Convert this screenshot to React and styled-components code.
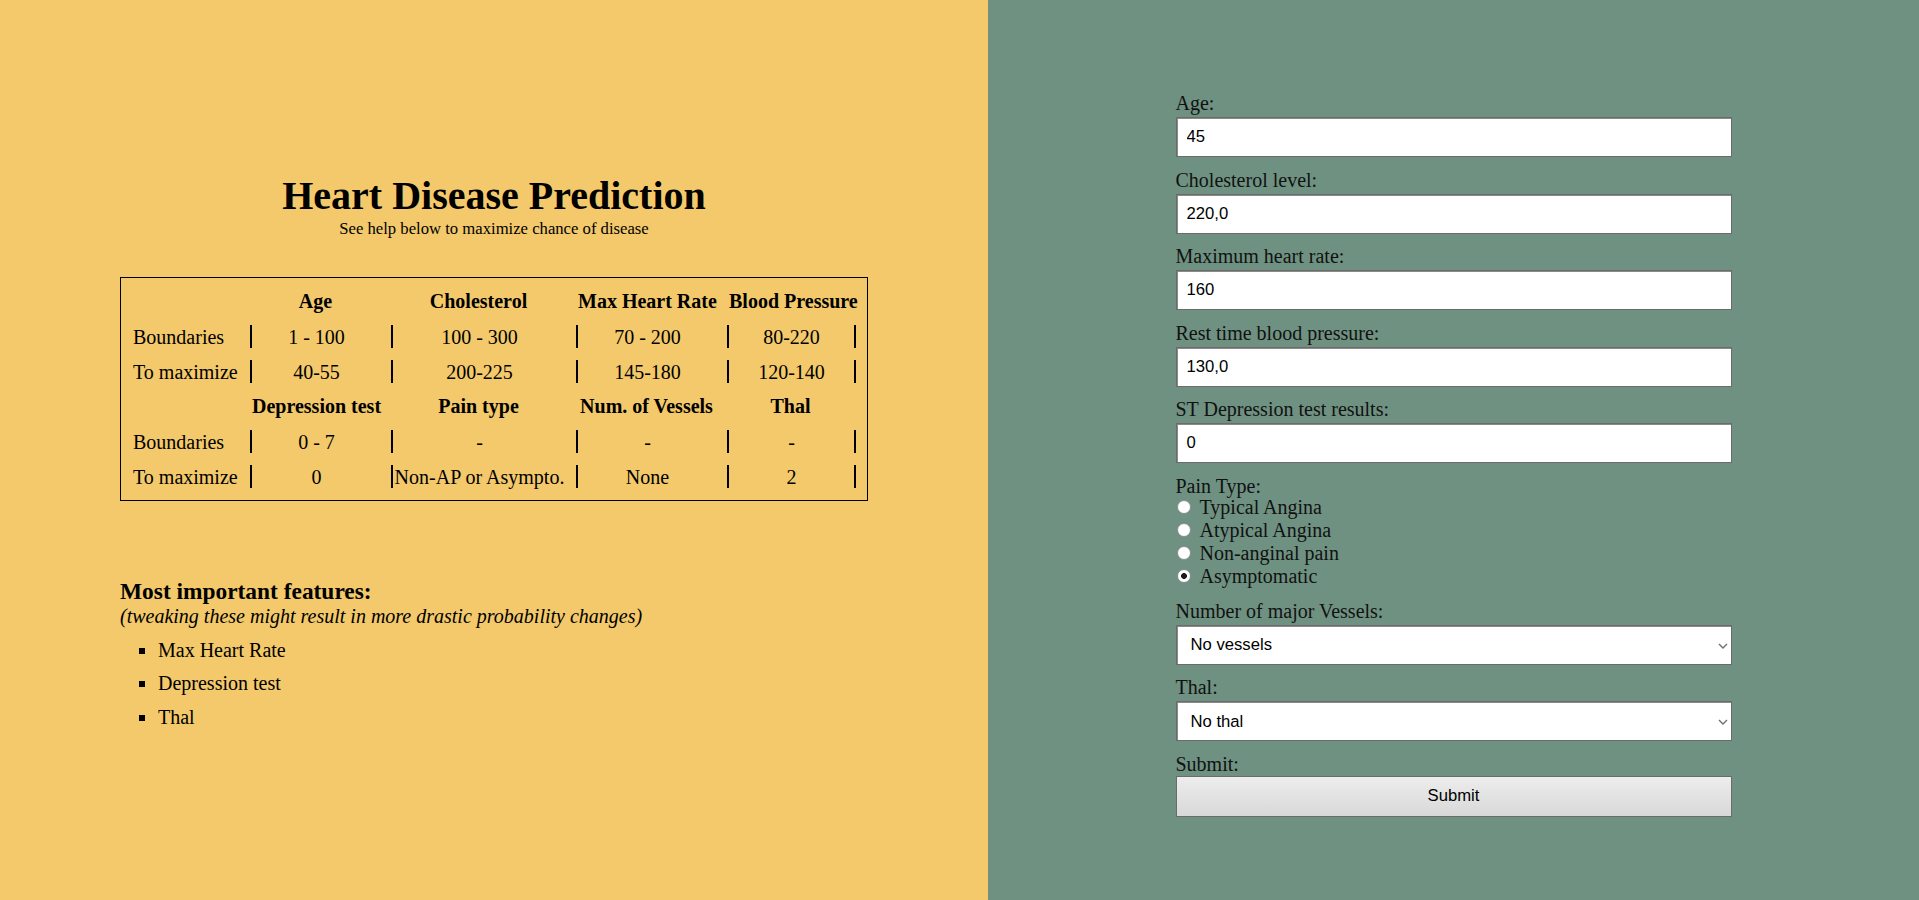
import React, { useState } from 'react';
import styled, { createGlobalStyle } from 'styled-components';

const features = [
  {
    headers: ['Age', 'Cholesterol', 'Max Heart Rate', 'Blood Pressure'],
    boundaries: ['1 - 100', '100 - 300', '70 - 200', '80-220'],
    maximize: ['40-55', '200-225', '145-180', '120-140'],
  },
  {
    headers: ['Depression test', 'Pain type', 'Num. of Vessels', 'Thal'],
    boundaries: ['0 - 7', '-', '-', '-'],
    maximize: ['0', 'Non-AP or Asympto.', 'None', '2'],
  },
];

const numberFields = [
  { name: 'age', label: 'Age:', value: '45' },
  { name: 'chol', label: 'Cholesterol level:', value: '220,0' },
  { name: 'thalach', label: 'Maximum heart rate:', value: '160' },
  { name: 'trestbps', label: 'Rest time blood pressure:', value: '130,0' },
  { name: 'oldpeak', label: 'ST Depression test results:', value: '0' },
];

const painTypes = ['Typical Angina', 'Atypical Angina', 'Non-anginal pain', 'Asymptomatic'];

const GlobalStyle = createGlobalStyle`
  html, body {
    margin: 0;
    padding: 0;
  }
  body {
    font-family: "Liberation Serif", "Times New Roman", serif;
    color: #000;
  }
`;

const Chevron = () => (
  <ChevronIcon width="10" height="6" viewBox="0 0 10 6" aria-hidden="true">
    <path d="M1 1l4 4 4-4" fill="none" stroke="#6f6f6f" strokeWidth="1.4" />
  </ChevronIcon>
);

const App = () => {
  const [pain, setPain] = useState('Asymptomatic');

  return (
    <Page>
      <GlobalStyle />
      <InfoPanel>
        <InfoContent>
          <Title>Heart Disease Prediction</Title>
          <Subtitle>See help below to maximize chance of disease</Subtitle>

          <HelpTable>
            <colgroup>
              <col style={{ width: 119 }} />
              <col style={{ width: 141 }} />
              <col style={{ width: 185 }} />
              <col style={{ width: 151 }} />
              <col style={{ width: 127 }} />
            </colgroup>
            <tbody>
              {features.map((group) => (
                <React.Fragment key={group.headers[0]}>
                  <tr>
                    <HeadCell />
                    {group.headers.map((h, i) => (
                      <HeadCell key={h} last={i === 3}>{h}</HeadCell>
                    ))}
                  </tr>
                  <tr>
                    <RowLabel>Boundaries</RowLabel>
                    {group.boundaries.map((v, i) => (
                      // eslint-disable-next-line react/no-array-index-key
                      <ValueCell key={i} last={i === 3}>{v}</ValueCell>
                    ))}
                  </tr>
                  <tr>
                    <RowLabel>To maximize</RowLabel>
                    {group.maximize.map((v, i) => (
                      // eslint-disable-next-line react/no-array-index-key
                      <ValueCell key={i} last={i === 3}>{v}</ValueCell>
                    ))}
                  </tr>
                </React.Fragment>
              ))}
            </tbody>
          </HelpTable>

          <Important>
            <ImportantTitle>Most important features:</ImportantTitle>
            <ImportantNote>(tweaking these might result in more drastic probability changes)</ImportantNote>
            <FeatureList>
              <li>Max Heart Rate</li>
              <li>Depression test</li>
              <li>Thal</li>
            </FeatureList>
          </Important>
        </InfoContent>
      </InfoPanel>

      <FormPanel>
        <Form onSubmit={(e) => e.preventDefault()}>
          {numberFields.map((f) => (
            <Field key={f.name}>
              <Label htmlFor={f.name}>{f.label}</Label>
              <TextInput id={f.name} name={f.name} type="text" defaultValue={f.value} />
            </Field>
          ))}

          <Field>
            <Label as="span" tight>Pain Type:</Label>
            {painTypes.map((p) => (
              <RadioRow key={p}>
                <Radio
                  type="radio"
                  name="cp"
                  value={p}
                  checked={pain === p}
                  onChange={() => setPain(p)}
                />
                {p}
              </RadioRow>
            ))}
          </Field>

          <Field>
            <Label htmlFor="ca">Number of major Vessels:</Label>
            <SelectWrap>
              <Select id="ca" name="ca" defaultValue="0">
                <option value="0">No vessels</option>
                <option value="1">1 vessel</option>
                <option value="2">2 vessels</option>
                <option value="3">3 vessels</option>
              </Select>
              <Chevron />
            </SelectWrap>
          </Field>

          <Field>
            <Label htmlFor="thal">Thal:</Label>
            <SelectWrap>
              <Select id="thal" name="thal" defaultValue="0">
                <option value="0">No thal</option>
                <option value="1">Fixed defect</option>
                <option value="2">Normal</option>
                <option value="3">Reversible defect</option>
              </Select>
              <Chevron />
            </SelectWrap>
          </Field>

          <Field>
            <Label as="span">Submit:</Label>
            <SubmitButton type="submit">Submit</SubmitButton>
          </Field>
        </Form>
      </FormPanel>
    </Page>
  );
};

const Page = styled.div`
  display: flex;
  height: 100vh;
  min-height: 900px;
`;

const InfoPanel = styled.div`
  width: 988px;
  flex-shrink: 0;
  background-color: #f3c96b;
  padding: 173px 0 0 120px;
  box-sizing: border-box;
`;

const InfoContent = styled.div`
  width: 748px;
  display: flex;
  flex-direction: column;
`;

const Title = styled.h1`
  margin: 0;
  font-size: 40px;
  line-height: 46px;
  font-weight: 700;
  text-align: center;
`;

const Subtitle = styled.small`
  display: block;
  font-size: 16.67px;
  line-height: 19px;
  text-align: center;
`;

const HelpTable = styled.table`
  margin-top: 39px;
  width: 748px;
  table-layout: fixed;
  border: 1px solid #000;
  border-collapse: separate;
  border-spacing: 0 12px;
  padding: 0 11px 0 12px;
  font-size: 20px;
`;

const HeadCell = styled.td`
  height: 23px;
  padding: 0 ${(p) => (p.last ? 2 : 12)}px 0 0;
  line-height: 23px;
  font-weight: 700;
  text-align: center;
  white-space: nowrap;
  border-right: 2px solid transparent;
`;

const ValueCell = styled.td`
  height: 23px;
  padding: 0 ${(p) => (p.last ? 0 : 10)}px 0 0;
  line-height: 22px;
  text-align: center;
  white-space: nowrap;
  border-right: 2px solid #000;
`;

const RowLabel = styled.td`
  height: 23px;
  padding: 0;
  line-height: 22px;
  text-align: left;
  white-space: nowrap;
  border-right: 2px solid #000;
`;

const Important = styled.div`
  margin-top: 77px;
`;

const ImportantTitle = styled.h3`
  margin: 0;
  font-size: 23.4px;
  line-height: 27px;
  font-weight: 700;
`;

const ImportantNote = styled.i`
  display: block;
  font-size: 20px;
  line-height: 23px;
`;

const FeatureList = styled.ul`
  margin: 0;
  padding-left: 38px;
  list-style: square;
  font-size: 20px;

  li {
    line-height: 23px;
    margin-top: 10.5px;
  }
`;

const FormPanel = styled.div`
  flex: 1;
  background-color: #6f9181;
  display: flex;
  justify-content: center;
  padding-top: 92px;
  box-sizing: border-box;
`;

const Form = styled.form`
  width: 556px;
  display: flex;
  flex-direction: column;
  gap: 11.6px;
`;

const Field = styled.div`
  display: flex;
  flex-direction: column;
`;

const Label = styled.label`
  font-size: 20px;
  line-height: 23px;
  margin-bottom: ${(p) => (p.tight ? -2 : 0)}px;
  color: #111;
`;

const controlBase = `
  box-sizing: border-box;
  width: 100%;
  height: 40px;
  border: 1px solid #6b6b6b;
  box-shadow: inset 1px 1px 0 #8a8a8a;
  background-color: #fff;
  font-family: "Liberation Sans", Arial, sans-serif;
  font-size: 16.67px;
  color: #000;
  outline: none;
`;

const TextInput = styled.input`
  ${controlBase}
  margin-top: 2px;
  padding: 0 10px;
`;

const SelectWrap = styled.div`
  position: relative;
  margin-top: 2px;
`;

const Select = styled.select`
  ${controlBase}
  display: block;
  padding: 0 24px 0 14px;
  appearance: none;
`;

const ChevronIcon = styled.svg`
  position: absolute;
  right: 4px;
  top: 50%;
  margin-top: -2px;
  pointer-events: none;
`;

const RadioRow = styled.label`
  display: flex;
  align-items: center;
  height: 23px;
  font-size: 20px;
  color: #111;
`;

const Radio = styled.input`
  appearance: none;
  width: 14px;
  height: 14px;
  margin: 0 9px 0 1px;
  border-radius: 50%;
  border: 1px solid #8d8d8d;
  background: #fff;
  box-sizing: border-box;

  &:checked {
    background: radial-gradient(circle, #1a1a1a 0 2.6px, #fff 3.2px);
  }
`;

const SubmitButton = styled.button`
  box-sizing: border-box;
  width: 100%;
  height: 41px;
  margin-top: 0;
  border: 1px solid #6b6b6b;
  background: linear-gradient(#ededed, #d8d8d8);
  font-family: "Liberation Sans", Arial, sans-serif;
  font-size: 16.67px;
  color: #000;
  cursor: pointer;
`;

export default App;
